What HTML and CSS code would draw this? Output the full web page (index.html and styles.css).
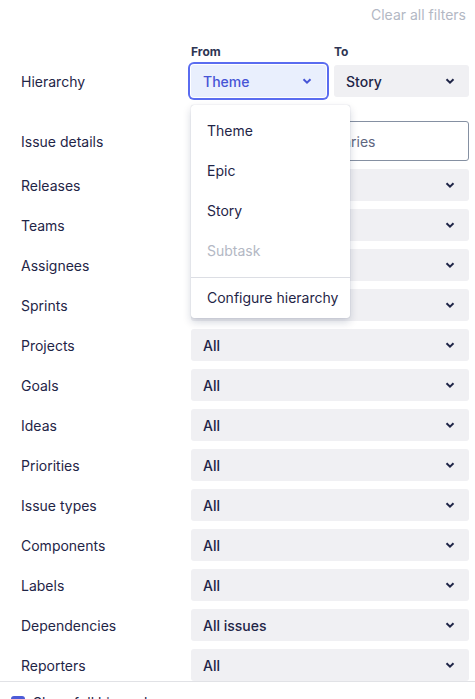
FILE: index.html
```html
<!DOCTYPE html>
<html>
	<head>
		<meta charset="UTF-8">
		<title>Filters</title>
		<link rel="stylesheet" href="styles.css">
	</head>
	<body>
		<div class="panel">
			<div class="scroll">
				<div class="top"><span class="clear">Clear all filters</span></div>

				<div class="heads">
					<span class="head">From</span>
					<span class="head">To</span>
				</div>
				<div class="row row-hier">
					<span class="label">Hierarchy</span>
					<div class="pair">
						<div class="select select-active">Theme<svg class="chev" viewBox="0 0 10 6"><path d="M1.5 1.2L5 4.6 8.5 1.2"/></svg></div>
						<div class="select">Story<svg class="chev" viewBox="0 0 10 6"><path d="M1.5 1.2L5 4.6 8.5 1.2"/></svg></div>
					</div>
					<!-- open hierarchy menu -->
					<ul class="menu">
						<li>Theme</li>
						<li>Epic</li>
						<li>Story</li>
						<li class="off">Subtask</li>
						<li class="sep">Configure hierarchy</li>
					</ul>
				</div>
				<div class="row row-input">
					<span class="label">Issue details</span>
					<div class="input">Search issue summaries</div>
				</div>
				<div class="row"><span class="label">Releases</span><div class="select">All<svg class="chev" viewBox="0 0 10 6"><path d="M1.5 1.2L5 4.6 8.5 1.2"/></svg></div></div>
				<div class="row"><span class="label">Teams</span><div class="select">All<svg class="chev" viewBox="0 0 10 6"><path d="M1.5 1.2L5 4.6 8.5 1.2"/></svg></div></div>
				<div class="row"><span class="label">Assignees</span><div class="select">All<svg class="chev" viewBox="0 0 10 6"><path d="M1.5 1.2L5 4.6 8.5 1.2"/></svg></div></div>
				<div class="row"><span class="label">Sprints</span><div class="select">All<svg class="chev" viewBox="0 0 10 6"><path d="M1.5 1.2L5 4.6 8.5 1.2"/></svg></div></div>
				<div class="row"><span class="label">Projects</span><div class="select">All<svg class="chev" viewBox="0 0 10 6"><path d="M1.5 1.2L5 4.6 8.5 1.2"/></svg></div></div>
				<div class="row"><span class="label">Goals</span><div class="select">All<svg class="chev" viewBox="0 0 10 6"><path d="M1.5 1.2L5 4.6 8.5 1.2"/></svg></div></div>
				<div class="row"><span class="label">Ideas</span><div class="select">All<svg class="chev" viewBox="0 0 10 6"><path d="M1.5 1.2L5 4.6 8.5 1.2"/></svg></div></div>
				<div class="row"><span class="label">Priorities</span><div class="select">All<svg class="chev" viewBox="0 0 10 6"><path d="M1.5 1.2L5 4.6 8.5 1.2"/></svg></div></div>
				<div class="row"><span class="label">Issue types</span><div class="select">All<svg class="chev" viewBox="0 0 10 6"><path d="M1.5 1.2L5 4.6 8.5 1.2"/></svg></div></div>
				<div class="row"><span class="label">Components</span><div class="select">All<svg class="chev" viewBox="0 0 10 6"><path d="M1.5 1.2L5 4.6 8.5 1.2"/></svg></div></div>
				<div class="row"><span class="label">Labels</span><div class="select">All<svg class="chev" viewBox="0 0 10 6"><path d="M1.5 1.2L5 4.6 8.5 1.2"/></svg></div></div>
				<div class="row"><span class="label">Dependencies</span><div class="select">All issues<svg class="chev" viewBox="0 0 10 6"><path d="M1.5 1.2L5 4.6 8.5 1.2"/></svg></div></div>
				<div class="row"><span class="label">Reporters</span><div class="select">All<svg class="chev" viewBox="0 0 10 6"><path d="M1.5 1.2L5 4.6 8.5 1.2"/></svg></div></div>
			</div>
			<div class="foot">
				<span class="check"></span>
				<span>Show full hierarchy</span>
			</div>
		</div>
	</body>
</html>
```

FILE: styles.css
```css
body{
margin: 0;
font-family: Inter, "Noto Sans", sans-serif;
font-size: 14px;
color: #1f2547;
background: #fff;
}
.panel{
height: 699px;
display: flex;
flex-direction: column;
overflow: hidden;
}
.scroll{
height: 681px;
flex: none;
overflow: hidden;
padding: 0 6px 0 21px;
}
.top{
display: flex;
justify-content: flex-end;
height: 28px;
align-items: center;
padding-right: 3px;
}
.clear{
color: #b3b8c4;
}
.heads{
display: flex;
gap: 8px;
margin: 17px 0 0 170px;
height: 14px;
}
.head{
flex: 1;
font-size: 12px;
font-weight: 700;
color: #2e3553;
line-height: 14px;
}
.row{
display: flex;
align-items: center;
height: 32px;
margin-top: 8px;
}
.row-hier{
position: relative;
margin-top: 6px;
}
.row-input{
height: 40px;
margin-top: 24px;
}
.label{
width: 170px;
flex: none;
}
.pair{
flex: 1;
display: flex;
gap: 8px;
}
.select{
flex: 1;
height: 32px;
display: flex;
align-items: center;
justify-content: space-between;
padding: 0 14px 0 12px;
background: #f0f0f3;
border-radius: 3px;
font-weight: 500;
}
.select-active{
background: #e9effd;
color: #4654d6;
box-shadow: 0 0 0 1px #fff, 0 0 0 3px #5a6cf0;
}
.chev{
width: 10px;
height: 6px;
fill: none;
stroke: currentColor;
stroke-width: 2;
}
.input{
flex: 1;
height: 38px;
border: 1px solid #8590a2;
border-radius: 3px;
display: flex;
align-items: center;
padding: 0 12px 0 22px;
color: #5e6680;
}
.menu{
position: absolute;
top: 40px;
left: 170px;
width: 159px;
margin: 0;
padding: 6px 0 0;
list-style: none;
background: #fff;
border-radius: 3px;
box-shadow: 0 4px 8px rgba(9,30,66,.18), 0 0 1px rgba(9,30,66,.3);
z-index: 2;
}
.menu li{
height: 40px;
line-height: 40px;
padding-left: 16px;
}
.menu .off{
color: #b3b8c4;
}
.menu .sep{
border-top: 1px solid #dcdee4;
margin-top: 6px;
}
.foot{
border-top: 1px solid #e1e2e6;
display: flex;
align-items: center;
gap: 8px;
padding: 12px 11px;
}
.check{
width: 14px;
height: 14px;
border-radius: 3px;
background: #4c5bd8;
}
```
